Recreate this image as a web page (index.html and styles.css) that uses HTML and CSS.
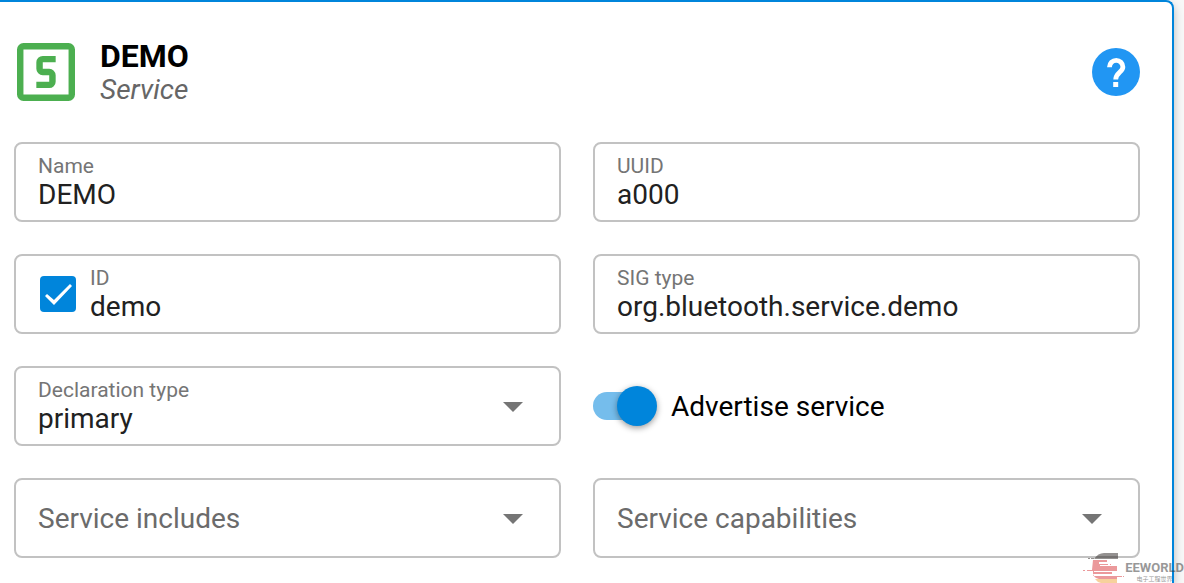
FILE: index.html
```html
<!doctype html>
<html lang="en">
  <head>
    <meta charset="UTF-8" />
    <meta name="viewport" content="width=device-width, initial-scale=1.0" />
    <title>DEMO - Service</title>
    <link rel="stylesheet" href="styles.css">
  </head>
  <body>
    <main class="card">
      <header class="card-header">
        <svg class="service-icon" viewBox="3 3 18 18" aria-hidden="true">
          <path d="M3,5A2,2 0 0,1 5,3H19A2,2 0 0,1 21,5V19A2,2 0 0,1 19,21H5A2,2 0 0,1 3,19V5M5,5V19H19V5H5Z" />
          <path d="M11,7A2,2 0 0,0 9,9V11A2,2 0 0,0 11,13H13V15H9V17H13A2,2 0 0,0 15,15V13A2,2 0 0,0 13,11H11V9H15V7H11Z" />
        </svg>
        <div class="card-heading">
          <h1 class="card-title">DEMO</h1>
          <p class="card-subtitle">Service</p>
        </div>
        <button type="button" class="help-button" aria-label="Help">
          <svg viewBox="0 0 48 48" aria-hidden="true">
            <path d="M17.5 19.3V19a6.7 6.7 0 0 1 13.4 0c0 5-7.2 6-7.2 12.5" fill="none" stroke="#fff" stroke-width="4.8" />
            <path d="M21.2 34h5v5h-5z" fill="#fff" />
          </svg>
        </button>
      </header>

      <form class="form-grid">
        <div class="field">
          <div class="control">
            <label for="name">Name</label>
            <input type="text" id="name" value="DEMO" />
          </div>
        </div>

        <div class="field">
          <div class="control">
            <label for="uuid">UUID</label>
            <input type="text" id="uuid" value="a000" />
          </div>
        </div>

        <div class="field">
          <input type="checkbox" class="checkbox" id="use-id" aria-label="Use ID" checked />
          <div class="control">
            <label for="service-id">ID</label>
            <input type="text" id="service-id" value="demo" />
          </div>
        </div>

        <div class="field">
          <div class="control">
            <label for="sig-type">SIG type</label>
            <input type="text" id="sig-type" value="org.bluetooth.service.demo" />
          </div>
        </div>

        <div class="field">
          <div class="control">
            <label for="declaration">Declaration type</label>
            <select id="declaration">
              <option>primary</option>
              <option>secondary</option>
            </select>
          </div>
          <svg class="arrow" viewBox="0 0 20 10" aria-hidden="true"><path d="M0 0h20L10 10z" /></svg>
        </div>

        <label class="toggle-row">
          <input type="checkbox" class="toggle" role="switch" checked />
          Advertise service
        </label>

        <div class="field">
          <div class="control control-empty">
            <label for="includes">Service includes</label>
            <select id="includes"><option value=""></option></select>
          </div>
          <svg class="arrow" viewBox="0 0 20 10" aria-hidden="true"><path d="M0 0h20L10 10z" /></svg>
        </div>

        <div class="field">
          <div class="control control-empty">
            <label for="capabilities">Service capabilities</label>
            <select id="capabilities"><option value=""></option></select>
          </div>
          <svg class="arrow" viewBox="0 0 20 10" aria-hidden="true"><path d="M0 0h20L10 10z" /></svg>
        </div>
      </form>
    </main>

    <div class="watermark">
      <svg class="watermark-logo" viewBox="0 0 42 30" aria-hidden="true">
        <path d="M11 6Q15 0 21 0H35V6z" fill="#2b2523" />
        <path d="M5 5h2v1H5zM8 5h3v1H8z" fill="#2b2523" />
        <path d="M10 7h14v2h-8v2h9v1h-8v1H34v5H11v1h18v2H10v2H34v3H16q-5-1-6-5V18H4v-1h5z" fill="#d9363a" />
        <path d="M0 17h2v1H0zM27 11h1v1h-1zM34 23h5v1h-5zM40 23h1v1h-1z" fill="#d9363a" />
        <path d="M12 26H34v4H18q-4-1-6-4z" fill="#f0a43c" />
      </svg>
      <div class="watermark-text">
        <span class="watermark-name">EEWORLD</span>
        <span class="watermark-caption" lang="zh">电子工程世界</span>
      </div>
    </div>
  </body>
</html>
```
FILE: styles.css
```css
* {
  margin: 0;
  padding: 0;
  box-sizing: border-box;
}

body {
  font-family: Roboto, "Noto Sans CJK SC", sans-serif;
  font-size: 28px;
  color: #000;
  background-color: #f8f8f8;
  min-height: 100vh;
  display: flex;
  overflow: hidden;
}

.card {
  flex: 1;
  margin-right: 10px;
  padding: 36px 32px 24px 14px;
  background-color: #fff;
  border-top: 2px solid #0085db;
  border-right: 2px solid #0085db;
  border-top-right-radius: 8px;
  box-shadow: 0 4px 10px rgba(0, 0, 0, 0.25);
}

.card-header {
  display: flex;
  align-items: center;
  margin-bottom: 36px;
  padding-left: 3px;
}

.service-icon {
  width: 58px;
  height: 58px;
  fill: #4caf50;
}

.card-heading {
  flex: 1;
  margin-left: 25px;
}

.card-title {
  font-size: 32px;
  font-weight: 700;
  line-height: 36px;
}

.card-subtitle {
  font-size: 28px;
  font-style: italic;
  line-height: 32px;
  color: #666;
}

.help-button {
  width: 48px;
  height: 48px;
  border: none;
  border-radius: 50%;
  background-color: #2196f3;
  cursor: pointer;
}

.help-button svg {
  display: block;
}

.form-grid {
  display: grid;
  grid-template-columns: 1fr 1fr;
  gap: 32px;
}

.field {
  position: relative;
  display: flex;
  align-items: center;
  min-height: 80px;
  padding: 10px 22px 8px;
  border: 2px solid #c2c2c2;
  border-radius: 8px;
}

.control {
  flex: 1;
  min-width: 0;
  display: grid;
}

.control label {
  font-size: 21px;
  line-height: 24px;
  color: #757575;
}

.control input,
.control select {
  width: 100%;
  height: 34px;
  border: none;
  outline: none;
  background: transparent;
  font-family: inherit;
  font-size: 28px;
  line-height: 34px;
  color: #212121;
  appearance: none;
}

/* nothing selected: the label takes the place of the value */
.control-empty label,
.control-empty select {
  grid-area: 1 / 1;
}

.control-empty label {
  font-size: 28px;
  line-height: 34px;
  color: #6b6b6b;
  pointer-events: none;
}

.arrow {
  position: absolute;
  right: 36px;
  width: 20px;
  height: 10px;
  fill: #757575;
  pointer-events: none;
}

.checkbox {
  position: relative;
  width: 36px;
  height: 36px;
  margin: 0 14px 2px 2px;
  border-radius: 4px;
  background-color: #0085db;
  appearance: none;
}

.checkbox:checked::after {
  content: "";
  position: absolute;
  inset: 0;
  background-color: #fff;
  clip-path: polygon(5px 20px, 7px 18px, 14px 24px, 30px 8px, 32px 10px, 14px 29px);
}

.toggle-row {
  display: flex;
  align-items: center;
  gap: 14px;
}

.toggle {
  position: relative;
  width: 64px;
  height: 40px;
  appearance: none;
}

.toggle::before {
  content: "";
  position: absolute;
  top: 6px;
  left: 0;
  width: 56px;
  height: 28px;
  border-radius: 14px;
  background-color: #75bdec;
}

.toggle::after {
  content: "";
  position: absolute;
  top: 0;
  right: 0;
  width: 40px;
  height: 40px;
  border-radius: 50%;
  background-color: #0085db;
  box-shadow: 0 2px 6px rgba(0, 0, 0, 0.4);
}

.watermark {
  position: absolute;
  right: 0;
  bottom: 0;
  display: flex;
  align-items: flex-end;
  opacity: 0.5;
  pointer-events: none;
}

.watermark-logo {
  width: 42px;
  height: 30px;
}

.watermark-text {
  display: flex;
  flex-direction: column;
  align-items: center;
  color: #333;
}

.watermark-name {
  font-size: 13px;
  font-weight: 700;
  line-height: 15px;
}

.watermark-caption {
  font-family: "Noto Sans CJK SC", sans-serif;
  font-size: 6px;
  line-height: 8px;
}
```
